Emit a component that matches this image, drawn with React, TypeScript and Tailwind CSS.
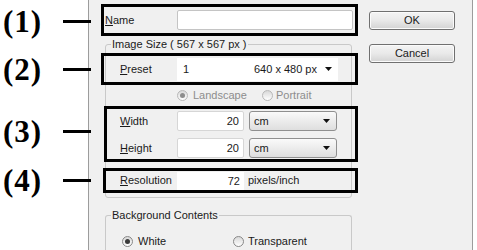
const NOTES = [
  { label: "(1)", mt: "mt-[5px]" },
  { label: "(2)", mt: "mt-[16px]" },
  { label: "(3)", mt: "mt-[30px]" },
  { label: "(4)", mt: "mt-[17px]" },
];

function Arrow() {
  return (
    <svg width="7" height="4" viewBox="0 0 7 4" className="shrink-0">
      <path d="M0 0h7L3.5 4z" fill="#111" />
    </svg>
  );
}

function Radio({ checked, disabled }: { checked?: boolean; disabled?: boolean }) {
  return (
    <span
      className={`flex h-[11px] w-[11px] shrink-0 items-center justify-center rounded-full border bg-linear-to-b from-[#d8d8d8] to-white ${
        disabled ? "border-[#b8b8b8]" : "border-[#888888]"
      }`}
    >
      {checked && (
        <span className={`h-[5px] w-[5px] rounded-full ${disabled ? "bg-[#8c8c8c]" : "bg-[#3a3a3a]"}`} />
      )}
    </span>
  );
}

function Key({ k, rest }: { k: string; rest: string }) {
  return (
    <span>
      <u className="underline-offset-[1px]">{k}</u>
      {rest}
    </span>
  );
}

export default function App() {
  return (
    <div className="flex h-[250px] w-[477px] overflow-hidden bg-white font-['Liberation_Sans',Arial,sans-serif] text-[11px] leading-[13px] text-[#1a1a1a]">
      {/* callout numbers */}
      <div className="flex w-[88px] shrink-0 flex-col">
        {NOTES.map((n) => (
          <div key={n.label} className={`flex h-[32px] items-center pl-[3px] ${n.mt}`}>
            <span className="w-[60px] font-['Liberation_Serif','Times_New_Roman',serif] text-[31px] font-bold leading-none tracking-[1px] text-black">
              {n.label}
            </span>
            <span className="relative z-10 -mr-[3px] h-[3px] w-[28px] bg-black" />
          </div>
        ))}
      </div>

      {/* dialog */}
      <div className="flex h-full w-[385px] shrink-0 border-x border-[#9c9c9c] bg-[#f0f0f0]">
        <div className="flex w-[269px] shrink-0 flex-col pl-[12px] pt-[4px]">
          <div className="flex h-[32px] w-[257px] items-center border-[3px] border-black">
            <span className="w-[73px] pl-[1px]">
              <Key k="N" rest="ame" />
            </span>
            <div className="h-[20px] w-[176px] rounded-[2px] border border-[#c4c4c4] bg-white" />
          </div>

          <div className="ml-[4px] mt-[8px] flex w-[247px] flex-col rounded-[3px] border border-[#c9c9c9] pb-[4px]">
            <span className="-mt-[7px] ml-[5px] self-start bg-[#f0f0f0] px-[1px]">Image Size ( 567 x 567 px )</span>

            <div className="-ml-[5px] mt-[2px] flex h-[32px] w-[257px] items-center border-[3px] border-black">
              <span className="w-[73px] pl-[16px]">
                <Key k="P" rest="reset" />
              </span>
              <div className="flex h-[23px] w-[161px] items-center bg-white px-[6px]">
                <span>1</span>
                <span className="ml-auto">640 x 480 px</span>
                <span className="ml-[8px]">
                  <Arrow />
                </span>
              </div>
            </div>

            <div className="flex h-[21px] items-center pl-[71px] text-[#8d8d8d]">
              <div className="flex w-[85px] items-center gap-[5px]">
                <Radio checked disabled />
                <span>Landscape</span>
              </div>
              <div className="flex items-center gap-[3px]">
                <Radio disabled />
                <span>Portrait</span>
              </div>
            </div>

            <div className="-ml-[2px] flex w-[254px] flex-col gap-[7px] border-[3px] border-black pb-[1px] pt-[2px]">
              {["W|idth", "H|eight"].map((l) => {
                const [k, rest] = l.split("|");
                return (
                  <div key={l} className="flex h-[20px] items-center">
                    <span className="w-[70px] pl-[13px]">
                      <Key k={k} rest={rest} />
                    </span>
                    <div className="h-[20px] w-[67px] rounded-[2px] border border-[#d6d6d6] bg-white pr-[4px] text-right leading-[18px]">
                      20
                    </div>
                    <div className="ml-[5px] flex h-[20px] w-[88px] items-center rounded-[3px] border border-[#8f8f8f] bg-linear-to-b from-[#fafafa] to-[#dedede] pl-[4px] pr-[6px]">
                      <span>cm</span>
                      <span className="ml-auto">
                        <Arrow />
                      </span>
                    </div>
                  </div>
                );
              })}
            </div>

            <div className="-ml-[3px] mt-[6px] flex h-[25px] w-[255px] items-center border-[3px] border-black">
              <span className="w-[71px] pl-[14px]">
                <Key k="R" rest="esolution" />
              </span>
              <div className="h-[18px] w-[67px] bg-white pr-[4px] text-right leading-[18px]">72</div>
              <span className="ml-[4px]">pixels/inch</span>
            </div>
          </div>

          <div className="ml-[4px] mt-[17px] flex w-[247px] flex-1 flex-col rounded-t-[3px] border border-b-0 border-[#c9c9c9]">
            <span className="-mt-[7px] ml-[5px] self-start bg-[#f0f0f0] px-[1px]">Background Contents</span>
            <div className="mt-[10px] flex h-[18px] items-center pl-[16px]">
              <div className="flex w-[111px] items-center gap-[5px]">
                <Radio checked />
                <span>White</span>
              </div>
              <div className="flex items-center gap-[4px]">
                <Radio />
                <span>Transparent</span>
              </div>
            </div>
          </div>
        </div>

        <div className="ml-[11px] flex flex-col gap-[14px] pt-[11px]">
          {["OK", "Cancel"].map((b) => (
            <button
              key={b}
              className="flex h-[19px] w-[86px] items-center justify-center rounded-[3px] border border-[#707070] bg-linear-to-b from-[#f4f4f4] via-[#e9e9e9] to-[#d3d3d3] shadow-[inset_0_0_0_1px_#fbfbfb]"
            >
              {b}
            </button>
          ))}
        </div>
      </div>
    </div>
  );
}
